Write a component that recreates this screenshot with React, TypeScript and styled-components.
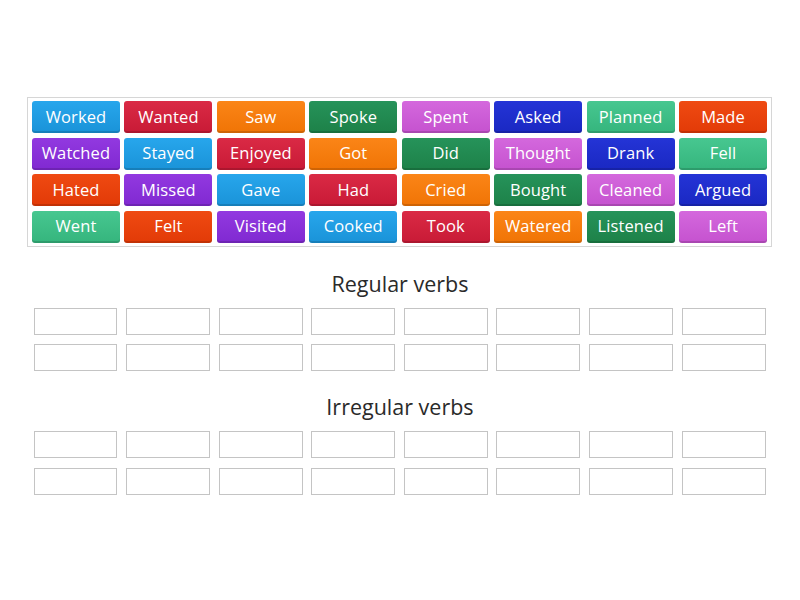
import React from "react";
import styled, { createGlobalStyle } from "styled-components";

const GlobalStyle = createGlobalStyle`
  html, body { margin: 0; padding: 0; background: #ffffff; }
  body { font-family: "Open Sans", "Noto Sans", sans-serif; }
`;

const COLORS: Record<string, [string, string]> = {
  blue: ["#27a6ec", "#1a93d8"],
  red: ["#da2a45", "#c81a36"],
  orange: ["#fb8517", "#f07405"],
  dkgreen: ["#26935a", "#1d8148"],
  pink: ["#d468dd", "#c552cf"],
  dkblue: ["#2434d6", "#1a28c2"],
  ltgreen: ["#47c790", "#35b57d"],
  redorange: ["#ef4a12", "#e23a07"],
  purple: ["#9239e0", "#8029d1"],
};

const TILES: [string, string][] = [
  ["Worked", "blue"], ["Wanted", "red"], ["Saw", "orange"], ["Spoke", "dkgreen"],
  ["Spent", "pink"], ["Asked", "dkblue"], ["Planned", "ltgreen"], ["Made", "redorange"],
  ["Watched", "purple"], ["Stayed", "blue"], ["Enjoyed", "red"], ["Got", "orange"],
  ["Did", "dkgreen"], ["Thought", "pink"], ["Drank", "dkblue"], ["Fell", "ltgreen"],
  ["Hated", "redorange"], ["Missed", "purple"], ["Gave", "blue"], ["Had", "red"],
  ["Cried", "orange"], ["Bought", "dkgreen"], ["Cleaned", "pink"], ["Argued", "dkblue"],
  ["Went", "ltgreen"], ["Felt", "redorange"], ["Visited", "purple"], ["Cooked", "blue"],
  ["Took", "red"], ["Watered", "orange"], ["Listened", "dkgreen"], ["Left", "pink"],
];

const Page = styled.div`
  width: 800px;
  height: 600px;
  padding-top: 97px;
  box-sizing: border-box;
`;

const Bank = styled.div`
  margin-left: 27px;
  width: 745px;
  box-sizing: border-box;
  border: 1px solid #d6d6d6;
  padding: 3px 4px 3px 4px;
  display: grid;
  grid-template-columns: repeat(8, 1fr);
  column-gap: 4.5px;
  row-gap: 4.5px;
`;

const Tile = styled.div<{ $top: string; $bottom: string }>`
  height: 32px;
  box-sizing: border-box;
  border-radius: 3px;
  background: linear-gradient(${(p) => p.$top}, ${(p) => p.$bottom});
  box-shadow: inset 0 -2px 0 rgba(0, 0, 0, 0.14);
  color: #ffffff;
  font-size: 16.5px;
  font-weight: 500;
  display: flex;
  align-items: center;
  justify-content: center;
  padding-bottom: 2px;
  letter-spacing: 0.1px;
`;

const Heading = styled.div<{ $top: number }>`
  margin-top: ${(p) => p.$top}px;
  margin-bottom: 9px;
  height: 30px;
  line-height: 30px;
  text-align: center;
  font-size: 21.5px;
  color: #2a2a2a;
  font-weight: 400;
`;

const SlotGrid = styled.div`
  margin-left: 27px;
  width: 745px;
  box-sizing: border-box;
  padding: 0 6.5px;
  display: grid;
  grid-template-columns: repeat(8, 1fr);
  column-gap: 8.6px;
  row-gap: 9.5px;
`;

const Slot = styled.div`
  height: 27px;
  box-sizing: border-box;
  border: 1px solid #c4c4c4;
  background: #ffffff;
`;

const slots = Array.from({ length: 16 });

export default function App() {
  return (
    <>
      <GlobalStyle />
      <Page>
        <Bank>
          {TILES.map(([word, c]) => (
            <Tile key={word} $top={COLORS[c][0]} $bottom={COLORS[c][1]}>
              {word}
            </Tile>
          ))}
        </Bank>
        <Heading $top={22}>Regular verbs</Heading>
        <SlotGrid>
          {slots.map((_, i) => (
            <Slot key={i} />
          ))}
        </SlotGrid>
        <Heading $top={21}>Irregular verbs</Heading>
        <SlotGrid>
          {slots.map((_, i) => (
            <Slot key={i} />
          ))}
        </SlotGrid>
      </Page>
    </>
  );
}
